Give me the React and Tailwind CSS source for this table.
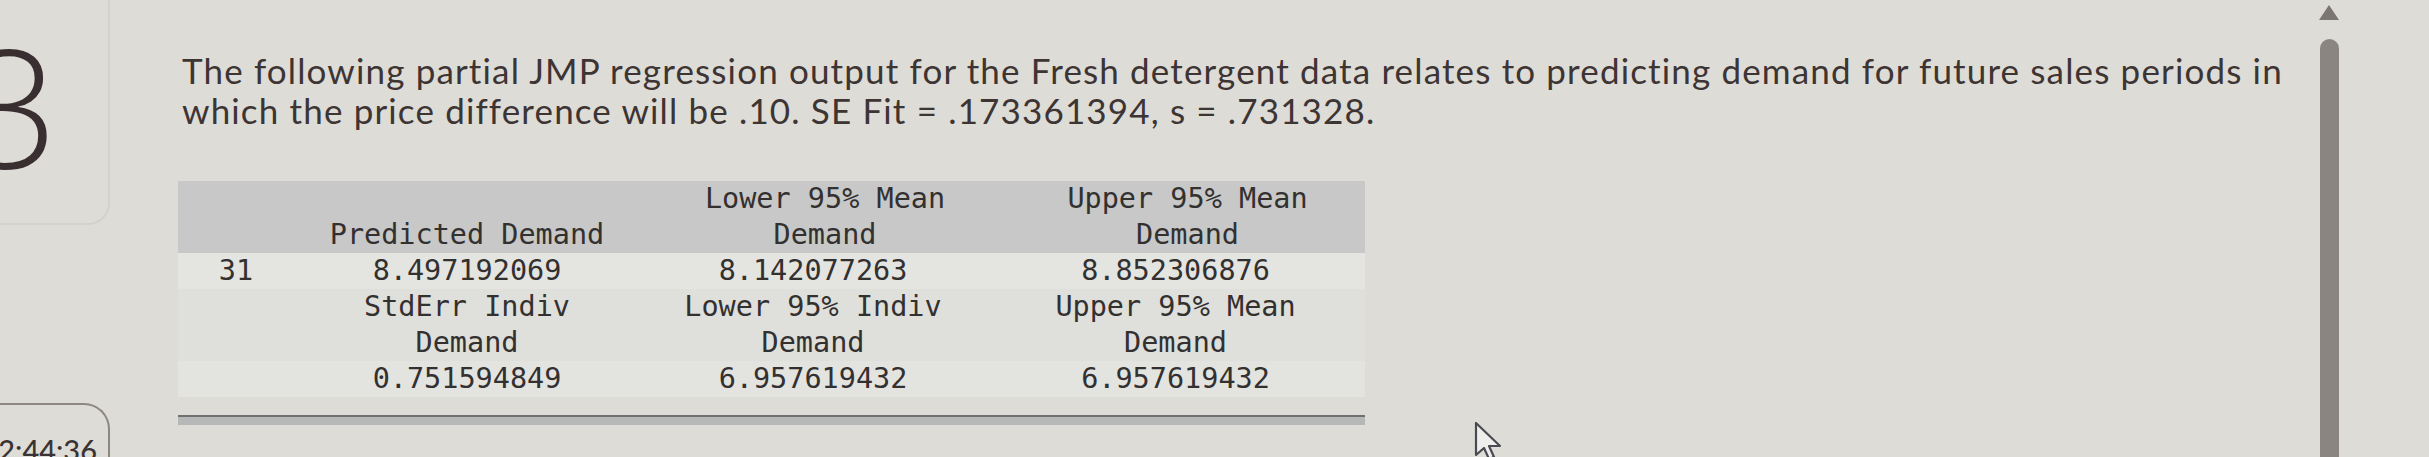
export default function App() {
  const mono = { fontFamily: '"DejaVu Sans Mono", "Liberation Mono", monospace' };

  return (
    <div className="relative flex h-[457px] w-full overflow-hidden bg-[#dedcd6] text-[#3b3333]">
      {/* left rail: question number + timer */}
      <div className="flex w-[110px] shrink-0 flex-col justify-between">
        <div className="flex h-[225px] rounded-br-[22px] border-r-2 border-b-2 border-[#d3d1cb]">
          <div className="flex w-[58px] justify-end overflow-hidden pt-[10px]">
            <span className="whitespace-nowrap font-['Open_Sans',sans-serif] text-[164px] font-light leading-[190px] text-[#3a2f30]">
              3
            </span>
          </div>
        </div>
        <div className="flex h-[54px] justify-end overflow-hidden rounded-tr-[26px] border-t-2 border-r-2 border-[#8d8883] pt-[30px] pr-[11px]">
          <span className="whitespace-nowrap font-['Lato',sans-serif] text-[29px] font-medium leading-[30px] text-[#3a3333]">
            02:44:36
          </span>
        </div>
      </div>

      {/* main content */}
      <div className="min-w-0 flex-1 pt-[50px] pl-[68px]">
        <p className="whitespace-nowrap pl-[4px] font-['Lato',sans-serif] text-[35px] leading-[40px] tracking-[1.15px] text-[#3d3434]">
          The following partial JMP regression output for the Fresh detergent data relates to predicting demand for future sales periods in
          <br />
          which the price difference will be .10. SE Fit = .173361394, s = .731328.
        </p>

        <div className="mt-[51px] w-[1187px] text-[28.5px] leading-[36px] text-[#333030]" style={mono}>
          <div className="grid grid-cols-[116px_346px_370px_1fr] bg-[#c7c8c7] text-center">
            <div />
            <div className="pt-[36px]">Predicted Demand</div>
            <div>
              Lower 95% Mean
              <br />
              Demand
            </div>
            <div>
              Upper 95% Mean
              <br />
              Demand
            </div>
          </div>
          <div className="grid grid-cols-[116px_346px_346px_1fr] bg-[#e4e4e1] text-center">
            <div>31</div>
            <div>8.497192069</div>
            <div>8.142077263</div>
            <div>8.852306876</div>
          </div>
          <div className="grid grid-cols-[116px_346px_346px_1fr] bg-[#dfdfdb] text-center">
            <div />
            <div>
              StdErr Indiv
              <br />
              Demand
            </div>
            <div>
              Lower 95% Indiv
              <br />
              Demand
            </div>
            <div>
              Upper 95% Mean
              <br />
              Demand
            </div>
          </div>
          <div className="grid grid-cols-[116px_346px_346px_1fr] bg-[#e3e3e0] text-center">
            <div />
            <div>0.751594849</div>
            <div>6.957619432</div>
            <div>6.957619432</div>
          </div>
          <div className="mt-[18px] h-[10px] border-t-2 border-[#6f7070] bg-[#b6b8b8]" />
        </div>
      </div>

      {/* scrollbar */}
      <div className="mr-[90px] flex w-[20px] shrink-0 flex-col items-center">
        <div className="mt-[5px] h-0 w-0 border-r-[10px] border-b-[15px] border-l-[10px] border-r-transparent border-b-[#7b7671] border-l-transparent" />
        <div className="mt-[19px] w-[19px] flex-1 rounded-t-full bg-[#8a8580]" />
      </div>

      {/* mouse pointer */}
      <svg className="absolute top-[421px] left-[1474px]" width="30" height="40" viewBox="0 0 30 40">
        <path d="M2 2 L2 34 L10 27 L15 38 L20 36 L15 25 L26 25 Z" fill="#eeeeec" stroke="#4a4a52" strokeWidth="2.2" strokeLinejoin="round" />
      </svg>
    </div>
  );
}
